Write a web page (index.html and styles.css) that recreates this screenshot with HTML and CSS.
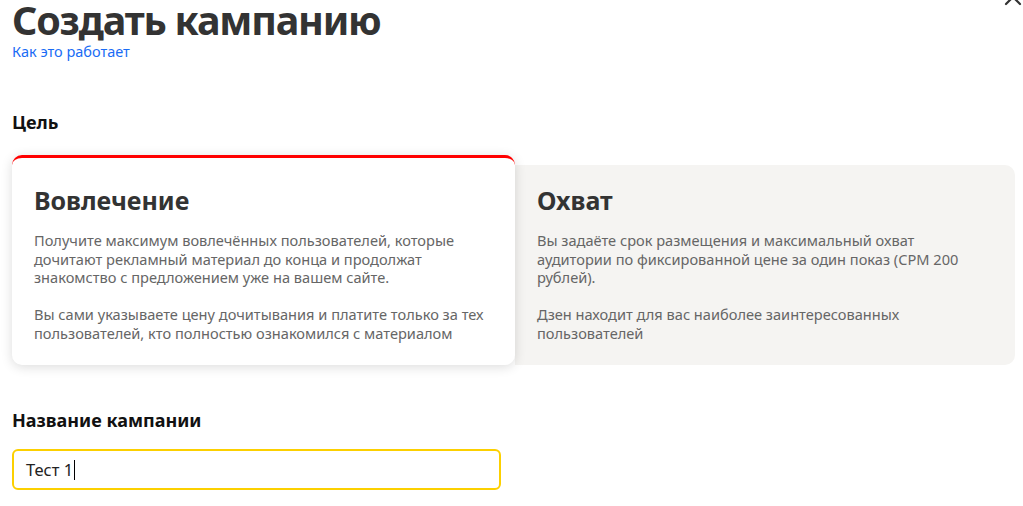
FILE: index.html
```html
<!DOCTYPE html>
<html lang="ru">
<head>
<meta charset="utf-8">
<link rel="stylesheet" href="styles.css">
</head>
<body>
<div class="page">
  <svg class="close" width="20" height="20" viewBox="0 0 20 20"><path d="M3 3L17 17M17 3L3 17" stroke="#333" stroke-width="2.2" stroke-linecap="round"/></svg>
  <h1 class="title">Создать кампанию</h1>
  <a class="help" href="#">Как это работает</a>
  <h2 class="section">Цель</h2>
  <div class="cards">
    <div class="card card-active">
      <h3 class="card-title">Вовлечение</h3>
      <p class="card-text">Получите максимум вовлечённых пользователей, которые дочитают рекламный материал до конца и продолжат знакомство с предложением уже на вашем сайте.</p>
      <p class="card-text">Вы сами указываете цену дочитывания и платите только за тех пользователей, кто полностью ознакомился с материалом</p>
    </div>
    <div class="card card-idle">
      <h3 class="card-title">Охват</h3>
      <p class="card-text">Вы задаёте срок размещения и максимальный охват аудитории по фиксированной цене за один показ (CPM 200 рублей).</p>
      <p class="card-text">Дзен находит для вас наиболее заинтересованных пользователей</p>
    </div>
  </div>
  <h2 class="section section-name">Название кампании</h2>
  <div class="input"><span class="input-value">Тест 1</span><span class="caret"></span></div>
</div>
</body>
</html>
```
FILE: styles.css
```css
html, body {
  margin: 0;
  padding: 0;
  background: #fff;
  overflow: hidden;
}
body {
  font-family: "Noto Sans", "Open Sans", sans-serif;
  color: #333;
}
.page {
  position: relative;
  width: 1023px;
  height: 506px;
  padding: 0 0 0 12px;
  box-sizing: border-box;
}
.close {
  position: absolute;
  right: 0px;
  top: -13px;
}
.title {
  margin: 0;
  font-size: 39.5px;
  line-height: 40px;
  font-weight: 700;
  color: #333;
  letter-spacing: -1.2px;
}
.help {
  display: block;
  margin-top: 2px;
  font-size: 14.5px;
  line-height: 18px;
  color: #1a6cf5;
  text-decoration: none;
}
.section {
  margin: 50px 0 0 0;
  font-size: 18px;
  line-height: 24px;
  font-weight: 700;
  color: #111;
}
.cards {
  display: flex;
  margin-top: 21px;
  width: 1003px;
  align-items: flex-end;
}
.card {
  box-sizing: border-box;
  padding: 0 22px;
  border-radius: 10px;
}
.card-active {
  position: relative;
  z-index: 1;
  width: 503px;
  height: 210px;
  background: #fff;
  border-top: 3px solid #ff0000;
  box-shadow: 0 2px 12px rgba(0,0,0,0.14);
  padding-top: 25px;
}
.card-idle {
  width: 500px;
  height: 200px;
  background: #f5f4f2;
  border-radius: 0 10px 10px 0;
  padding-top: 18px;
}
.card-title {
  margin: 0 0 14px 0;
  font-size: 25px;
  line-height: 34px;
  font-weight: 700;
  color: #333;
}
.card-text {
  margin: 0 0 18.5px 0;
  font-size: 14.6px;
  line-height: 18.5px;
  color: #666;
  width: 458px;
}
.card-idle .card-text {
  width: 448px;
}
.section-name {
  margin-top: 43px;
}
.input {
  display: flex;
  align-items: center;
  box-sizing: border-box;
  margin-top: 17px;
  width: 489px;
  height: 41px;
  border: 2px solid #fcd000;
  border-radius: 6px;
  padding: 0 12px;
}
.input-value {
  font-size: 16.5px;
  color: #222;
}
.caret {
  display: inline-block;
  width: 1px;
  height: 20px;
  background: #000;
  margin-left: 1px;
}
```
